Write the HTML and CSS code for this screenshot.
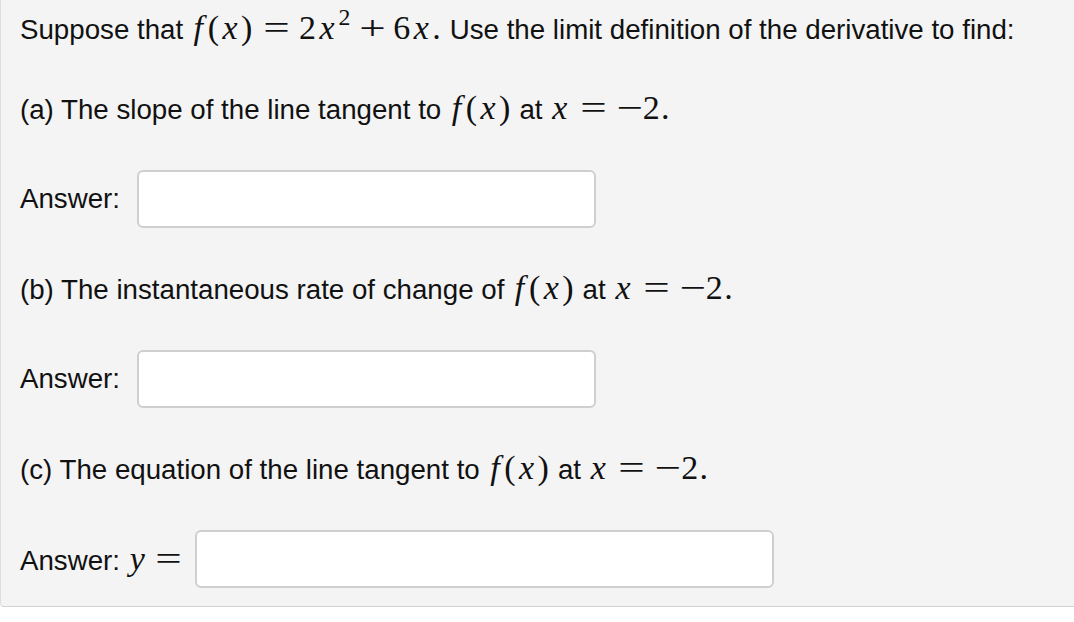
FILE: index.html
```html
<!DOCTYPE html>
<html>
<head>
<meta charset="utf-8">
<link rel="stylesheet" href="styles.css">
</head>
<body>
<div class="panel">
  <p class="q q-intro">Suppose that <span class="m"><i class="f">f</i>(<i>x</i>)<span class="rel">=</span>2<i>x</i><sup>2</sup><span class="bin">+</span>6<i>x</i>.</span> Use the limit definition of the derivative to find:</p>

  <p class="q">(a) The slope of the line tangent to <span class="m"><i class="f">f</i>(<i>x</i>)</span> at <span class="m"><i>x</i><span class="rel">=</span><span class="neg">−</span>2.</span></p>
  <div class="answer">
    <span class="label">Answer:</span>
    <input class="box" type="text">
  </div>

  <p class="q">(b) The instantaneous rate of change of <span class="m"><i class="f">f</i>(<i>x</i>)</span> at <span class="m"><i>x</i><span class="rel">=</span><span class="neg">−</span>2.</span></p>
  <div class="answer">
    <span class="label">Answer:</span>
    <input class="box" type="text">
  </div>

  <p class="q">(c) The equation of the line tangent to <span class="m"><i class="f">f</i>(<i>x</i>)</span> at <span class="m"><i>x</i><span class="rel">=</span><span class="neg">−</span>2.</span></p>
  <div class="answer answer-last">
    <span class="label">Answer: <span class="m"><i>y</i><span class="rel rel-end">=</span></span></span>
    <input class="box box-wide" type="text">
  </div>
</div>
</body>
</html>
```

FILE: styles.css
```css
html, body {
  margin: 0;
  padding: 0;
  background: #ffffff;
}

body {
  font-family: "Liberation Sans", Arial, sans-serif;
  color: #111;
}

.panel {
  background: #f4f4f4;
  border-left: 1px solid #dedede;
  border-bottom: 1px solid #d2d2d2;
  border-bottom-left-radius: 4px;
  padding: 10px 0 18px 19px;
  display: flex;
  flex-direction: column;
  align-items: flex-start;
}

.q {
  margin: 0 0 40px 0;
  font-size: 27.7px;
  line-height: 40px;
  height: 40px;
  white-space: nowrap;
}

.m {
  font-family: "Liberation Serif", "Times New Roman", serif;
  font-size: 34px;
  line-height: 1;
  letter-spacing: 0.04em;
}

.m i {
  font-style: italic;
  margin: 0 0.06em;
}

.m .f {
  margin-right: 0.1em;
  margin-left: 0.08em;
}

.m sup {
  font-size: 0.7em;
  line-height: 0;
  vertical-align: 0.6em;
  margin-left: 0.02em;
}

.rel,
.bin,
.neg {
  display: inline-block;
  transform: scaleX(1.38);
  font-style: normal;
  letter-spacing: 0;
}

.rel {
  margin: 0 0.385em;
}

.rel-end {
  margin-left: 0.32em;
  margin-right: 0;
}

.bin {
  margin: 0 0.33em;
}

.neg {
  margin: 0 0.11em;
}

.answer {
  display: flex;
  align-items: center;
  gap: 17px;
  height: 58px;
  margin-bottom: 42px;
}

.answer-last {
  margin-bottom: 0;
}

.label {
  font-size: 27.7px;
  white-space: nowrap;
}

.box {
  box-sizing: border-box;
  width: 459px;
  height: 58px;
  background: #fff;
  border: 2px solid #cfcfcf;
  border-radius: 6px;
  margin: 0;
  padding: 0;
  outline: none;
}

.box-wide {
  width: 579px;
}
```
